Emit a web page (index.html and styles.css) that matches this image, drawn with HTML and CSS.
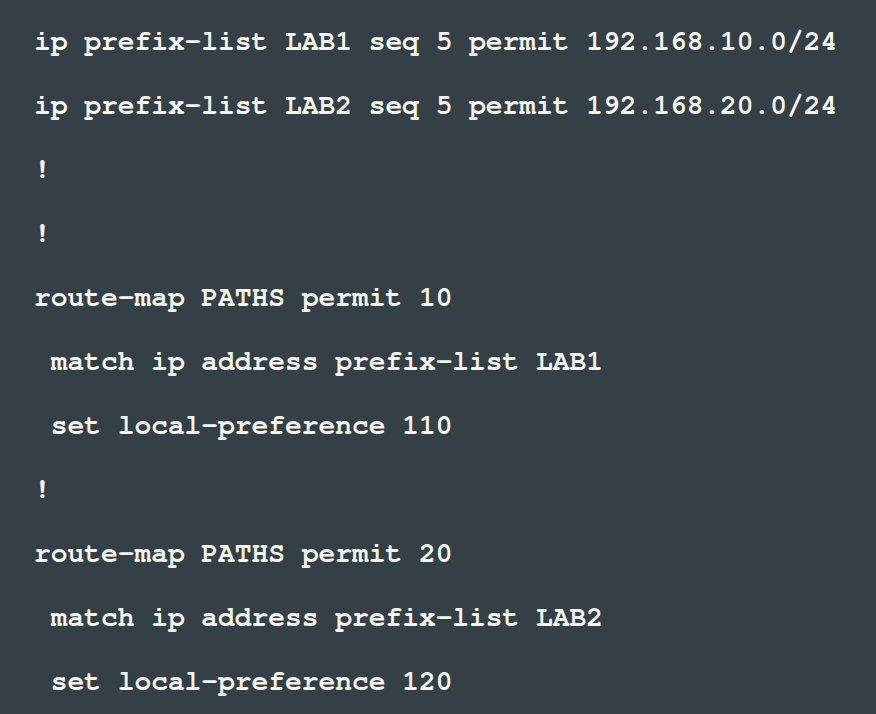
FILE: index.html
```html
<!DOCTYPE html>
<html>
<head>
<meta charset="utf-8">
<link rel="stylesheet" href="styles.css">
</head>
<body>
<div class="code">
<div class="line">ip prefix-list LAB1 seq 5 permit 192.168.10.0/24</div>
<div class="line">ip prefix-list LAB2 seq 5 permit 192.168.20.0/24</div>
<div class="line">!</div>
<div class="line">!</div>
<div class="line">route-map PATHS permit 10</div>
<div class="line"> match ip address prefix-list LAB1</div>
<div class="line"> set local-preference 110</div>
<div class="line">!</div>
<div class="line">route-map PATHS permit 20</div>
<div class="line"> match ip address prefix-list LAB2</div>
<div class="line"> set local-preference 120</div>
</div>
</body>
</html>
```
FILE: styles.css
```css
html, body {
  margin: 0;
  background: #343f46;
}
body {
  padding: 10px 0 0 34px;
  overflow: hidden;
  height: 714px;
  box-sizing: border-box;
}
.code {
  font-family: "Nimbus Mono PS", "Nimbus Mono L", "FreeMono", "Courier", "Liberation Mono", monospace;
  font-weight: bold;
  font-size: 27.9px;
  line-height: 64px;
  color: #f4f4ee;
}
.line {
  white-space: pre;
}
```
